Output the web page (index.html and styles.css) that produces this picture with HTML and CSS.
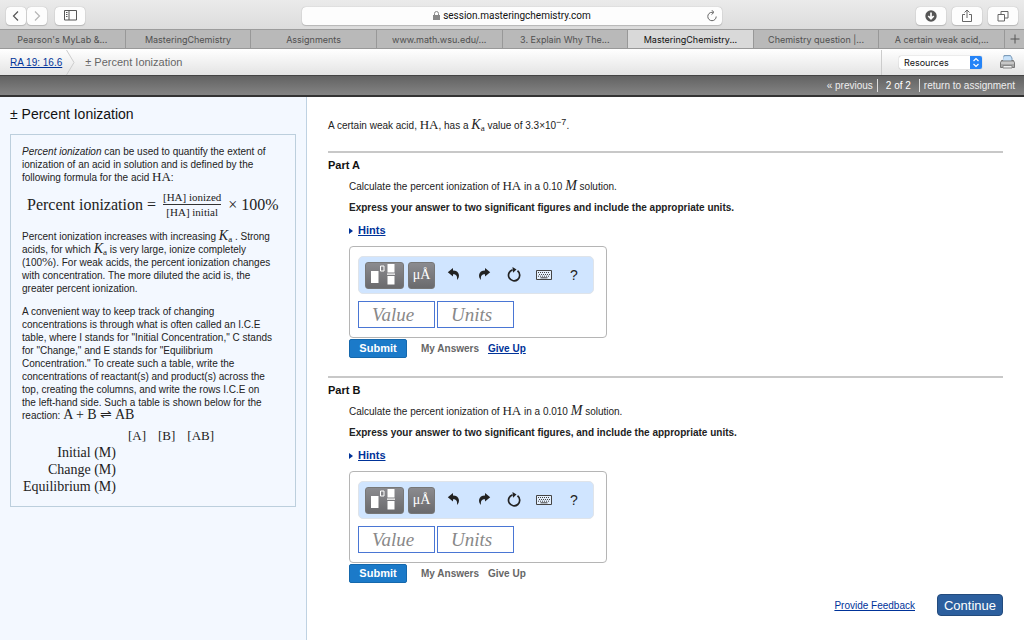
FILE: index.html
```html
<!DOCTYPE html>
<html lang="en">
<head>
<meta charset="utf-8">
<title>MasteringChemistry: ± Percent Ionization</title>
<link rel="stylesheet" href="styles.css">
</head>
<body>
<svg width="0" height="0" class="defs" aria-hidden="true">
  <symbol id="template" viewBox="1 1 28 22">
    <g fill="#fff"><path d="M0 8h8.500v12H0zM17.500 1h7v8.500h-7zM17.500 13h7v8.500h-7zM17 10.600h8v1.200h-8z"/></g>
    <path d="M10.500 3h3.500v5h-3.500z" fill="none" stroke="#fff" stroke-width="1"/>
  </symbol>
  <symbol id="undo" viewBox="0 0 14 14">
    <path d="M6 0 .8 4.200 6 8.400V6.300c2.800-.1 4.600 1.300 4 5.800 1.600-1.700 2.200-3.600 1.900-5.400C11.500 3.800 9.200 2.500 6 2.400z" fill="#222"/>
  </symbol>
  <symbol id="reset" viewBox="0 0 16 16">
    <path d="M11.500 3.800A5.600 5.600 0 1 1 6.500 2.900" fill="none" stroke="#222" stroke-width="1.700"/>
    <path d="M6.500 0 10.500 2.600 7 5.800z" fill="#222"/>
  </symbol>
  <symbol id="keyboard" viewBox="0 0 16 12">
    <path d="M.5 1.500h15v9H.5z" fill="#e4effc" stroke="#444"/>
    <path d="M2 3.500h12M3 5.500h11M2 7.200h12" fill="none" stroke="#444" stroke-dasharray="1 1"/>
    <path d="M4.500 8.800h7" stroke="#444"/>
  </symbol>
</svg>

<header class="browser-bar">
  <div class="bar-group">
    <div class="nav-pair">
      <button class="chrome-btn back" aria-label="Back"><svg width="10" height="12" viewBox="0 0 10 12"><path d="M7 1.500 2.500 6 7 10.500" fill="none" stroke="#555" stroke-width="1.200"/></svg></button>
      <button class="chrome-btn back" aria-label="Forward"><svg width="10" height="12" viewBox="0 0 10 12"><path d="M3 1.500 7.500 6 3 10.500" fill="none" stroke="#b5b5b5" stroke-width="1.200"/></svg></button>
    </div>
    <button class="chrome-btn" aria-label="Sidebar"><svg width="13" height="11" viewBox="0 0 13 11"><path d="M.5.5h12v9.500H.5zM5 .5V10" fill="none" stroke="#555"/><path d="M2 2.500h1.500M2 4.500h1.500M2 6.500h1.500" stroke="#555"/></svg></button>
  </div>
  <div class="address">
    <span class="address-text"><svg width="7" height="9" viewBox="0 0 7 9"><path d="M0 4h7v5H0z" fill="#888"/><path d="M1.500 4V2.500a2 2 0 0 1 4 0V4" fill="none" stroke="#888"/></svg>session.masteringchemistry.com</span>
    <button class="reload" aria-label="Reload"><svg width="12" height="12" viewBox="0 0 12 12"><path d="M7 2.300H6A4.200 4.200 0 1 0 10.200 6.500" fill="none" stroke="#666"/><path d="M5.500 0 8 2.300 5.500 4.600" fill="none" stroke="#666"/></svg></button>
  </div>
  <div class="bar-group bar-end">
    <button class="chrome-btn" aria-label="Downloads"><svg width="12" height="12" viewBox="0 0 12 12"><circle cx="6" cy="6" r="5.700" fill="#555"/><path d="M6 2.500v6M3.300 6 6 8.800 8.700 6" fill="none" stroke="#fff" stroke-width="1.700"/></svg></button>
    <button class="chrome-btn" aria-label="Share"><svg width="12" height="14" viewBox="0 0 12 14"><path d="M4 5.500H1.500v7h9v-7H8M6 9V1.200M3.500 3.500 6 1l2.500 2.500" fill="none" stroke="#666"/></svg></button>
    <button class="chrome-btn" aria-label="Show all tabs"><svg width="12" height="12" viewBox="0 0 12 12"><path d="M1 4.500h6.500V11H1z" fill="none" stroke="#666"/><path d="M4 4.500v-3h7V8H7.500" fill="none" stroke="#666"/></svg></button>
  </div>
</header>

<nav class="tabs" aria-label="Open tabs">
  <a class="tab" href="#">Pearson's MyLab &amp;...</a>
  <a class="tab" href="#">MasteringChemistry</a>
  <a class="tab" href="#">Assignments</a>
  <a class="tab" href="#">www.math.wsu.edu/...</a>
  <a class="tab" href="#">3. Explain Why The...</a>
  <a class="tab current" href="#">MasteringChemistry...</a>
  <a class="tab" href="#">Chemistry question |...</a>
  <a class="tab" href="#">A certain weak acid,...</a>
  <button class="new-tab" aria-label="New tab"><svg width="10" height="10" viewBox="0 0 10 10"><path d="M5 .5v9M.5 5h9" stroke="#555"/></svg></button>
</nav>

<div class="crumbs">
  <a class="crumb-link" href="#">RA 19: 16.6</a>
  <svg class="chevron" width="9" height="25" viewBox="0 0 9 25"><path d="M.5 0 8 12.500.5 25" fill="none" stroke="#ccc"/></svg>
  <span class="crumb-here">± Percent Ionization</span>
  <div class="tools">
    <div class="picker">
      <select aria-label="Resources"><option>Resources</option></select>
      <svg class="picker-arrows" width="12" height="13" viewBox="0 0 12 13"><path d="M0 0h10a2 2 0 0 1 2 2v9a2 2 0 0 1-2 2H0z" fill="#2584f7"/><path d="m3.500 5 2.500-2.500L8.500 5M3.500 8 6 10.500 8.500 8" fill="none" stroke="#fff" stroke-width="1.200"/></svg>
    </div>
    <button class="print" aria-label="Print"><svg width="15" height="14" viewBox="0 0 15 14"><path d="M3 7 4 .5h6.500L12 3v4z" fill="#b9d8f3" stroke="#7f9cb8"/><path d="M1.500 5.500h12L14.500 8v4.500H.5V8z" fill="#a7a7a7" stroke="#777"/><path d="M3 5.500 3.500 2h7l1 3.500z" fill="#c8e1f8"/><path d="M1 8h13" stroke="#e8e8e8"/><path d="M3 10.500h9v2.500H3z" fill="#eee" stroke="#888"/></svg></button>
  </div>
</div>

<nav class="pager" aria-label="Assignment items">
  <a href="#">« previous</a>
  <span class="pager-count">2 of 2</span>
  <a href="#">return to assignment</a>
</nav>

<div class="workspace">
  <aside class="intro">
    <h1>± Percent Ionization</h1>
    <div class="intro-box">
      <p><em>Percent ionization</em> can be used to quantify the extent of ionization of an acid in solution and is defined by the following formula for the acid <span class="math">HA</span>:</p>
      <div class="formula">
        <span>Percent ionization =</span>
        <span class="fraction"><span class="numerator">[HA] ionized</span><span>[HA] initial</span></span>
        <span>× 100%</span>
      </div>
      <p>Percent ionization increases with increasing <span class="math"><i>K</i><sub>a</sub></span> . Strong acids, for which <span class="math"><i>K</i><sub>a</sub></span> is very large, ionize completely (100<span class="math">%</span>). For weak acids, the percent ionization changes with concentration. The more diluted the acid is, the greater percent ionization.</p>
      <p>A convenient way to keep track of changing concentrations is through what is often called an I.C.E table, where I stands for "Initial Concentration," C stands for "Change," and E stands for "Equilibrium Concentration." To create such a table, write the concentrations of reactant(s) and product(s) across the top, creating the columns, and write the rows I.C.E on the left-hand side. Such a table is shown below for the reaction: <span class="math reaction">A + B ⇌ AB</span></p>
      <table class="ice">
        <thead><tr><td></td><th scope="col">[A]</th><th scope="col">[B]</th><th scope="col">[AB]</th></tr></thead>
        <tbody>
          <tr><th scope="row">Initial (M)</th><td></td><td></td><td></td></tr>
          <tr><th scope="row">Change (M)</th><td></td><td></td><td></td></tr>
          <tr><th scope="row">Equilibrium (M)</th><td></td><td></td><td></td></tr>
        </tbody>
      </table>
    </div>
  </aside>

  <main class="problem">
    <p class="stem">A certain weak acid, <span class="math">HA</span>, has a <span class="math"><i>K</i><sub>a</sub></span> value of 3.3×10<sup>−7</sup>.</p>

    <section class="part">
      <h2>Part A</h2>
      <div class="part-body">
        <p>Calculate the percent ionization of <span class="math">HA</span> in a 0.10 <span class="math"><i>M</i></span> solution.</p>
        <p class="directions">Express your answer to two significant figures and include the appropriate units.</p>
        <p class="hints"><svg width="4" height="6" viewBox="0 0 4 6"><path d="M0 0 4 3 0 6z" fill="#003399"/></svg><a href="#">Hints</a></p>
        <div class="answer">
          <div class="answer-tools">
            <button class="tool-dark wide" aria-label="Templates"><svg width="28" height="22"><use href="#template"/></svg></button>
            <button class="tool-dark">μÅ</button>
            <div class="tool-list">
              <button class="tool" aria-label="Undo"><svg width="14" height="14"><use href="#undo"/></svg></button>
              <button class="tool" aria-label="Redo"><svg class="flip" width="14" height="14"><use href="#undo"/></svg></button>
              <button class="tool" aria-label="Reset"><svg width="16" height="16"><use href="#reset"/></svg></button>
              <button class="tool" aria-label="Keyboard shortcuts"><svg width="16" height="12"><use href="#keyboard"/></svg></button>
              <button class="tool">?</button>
            </div>
          </div>
          <div class="fields">
            <input type="text" placeholder="Value" aria-label="Part A value">
            <input type="text" placeholder="Units" aria-label="Part A units">
          </div>
        </div>
        <div class="actions">
          <button class="submit">Submit</button>
          <span>My Answers</span>
          <a href="#">Give Up</a>
        </div>
      </div>
    </section>

    <section class="part">
      <h2>Part B</h2>
      <div class="part-body">
        <p>Calculate the percent ionization of <span class="math">HA</span> in a 0.010 <span class="math"><i>M</i></span> solution.</p>
        <p class="directions">Express your answer to two significant figures, and include the appropriate units.</p>
        <p class="hints"><svg width="4" height="6" viewBox="0 0 4 6"><path d="M0 0 4 3 0 6z" fill="#003399"/></svg><a href="#">Hints</a></p>
        <div class="answer">
          <div class="answer-tools">
            <button class="tool-dark wide" aria-label="Templates"><svg width="28" height="22"><use href="#template"/></svg></button>
            <button class="tool-dark">μÅ</button>
            <div class="tool-list">
              <button class="tool" aria-label="Undo"><svg width="14" height="14"><use href="#undo"/></svg></button>
              <button class="tool" aria-label="Redo"><svg class="flip" width="14" height="14"><use href="#undo"/></svg></button>
              <button class="tool" aria-label="Reset"><svg width="16" height="16"><use href="#reset"/></svg></button>
              <button class="tool" aria-label="Keyboard shortcuts"><svg width="16" height="12"><use href="#keyboard"/></svg></button>
              <button class="tool">?</button>
            </div>
          </div>
          <div class="fields">
            <input type="text" placeholder="Value" aria-label="Part B value">
            <input type="text" placeholder="Units" aria-label="Part B units">
          </div>
        </div>
        <div class="actions">
          <button class="submit">Submit</button>
          <span>My Answers</span>
          <span>Give Up</span>
        </div>
      </div>
    </section>

    <footer class="finish">
      <a href="#">Provide Feedback</a>
      <button class="continue">Continue</button>
    </footer>
  </main>
</div>
</body>
</html>
```
FILE: styles.css
```css
* { box-sizing: border-box; }
body {
  margin: 0;
  min-height: 100vh;
  display: flex;
  flex-direction: column;
  font: 10px/13px "Liberation Sans", Arial, sans-serif;
  color: #222;
  background: #fff;
}
.defs { position: absolute; }
svg { display: block; flex: none; }
button { font: inherit; margin: 0; padding: 0; border: 0; background: none; color: inherit; }
p, h1, h2 { margin: 0; }
a { color: #003399; }

.browser-bar {
  display: grid;
  grid-template-columns: 1fr 420px 1fr;
  align-items: center;
  height: 29px;
  padding: 2px 6px 0;
  background: linear-gradient(#ebebeb, #dcdcdc);
}
.bar-group { display: flex; gap: 8px; }
.bar-end { justify-content: flex-end; gap: 6px; }
.nav-pair { display: flex; gap: 1px; }
.chrome-btn {
  display: flex;
  align-items: center;
  justify-content: center;
  width: 30px;
  height: 18px;
  border-radius: 4px;
  background: #fdfdfd;
  box-shadow: 0 0 1px #999, 0 1px 1px #bbb;
}
.chrome-btn.back { width: 20px; }
.address {
  display: grid;
  grid-template-columns: 16px 1fr 16px;
  align-items: center;
  height: 18px;
  border-radius: 4px;
  background: #fdfdfd;
  box-shadow: 0 0 1px #999, 0 1px 1px #bbb;
  font-family: Roboto, sans-serif;
  color: #111;
}
.address-text { grid-column: 2; display: flex; align-items: center; justify-content: center; gap: 3px; }

.tabs {
  display: flex;
  height: 20px;
  border-top: 1px solid #9c9c9c;
  border-bottom: 1px solid #999;
  background: #b9b9b9;
  font: 9px/19px Inter, Roboto, sans-serif;
}
.tab {
  flex: 1;
  border-right: 1px solid #989898;
  color: #505050;
  text-align: center;
  text-decoration: none;
  white-space: nowrap;
}
.tab.current { background: #d9d9d9; color: #111; }
.new-tab { display: flex; align-items: center; justify-content: center; width: 19px; }

.crumbs {
  display: flex;
  align-items: center;
  height: 26px;
  padding-left: 10px;
  background: linear-gradient(#fff, #e4e4e4);
}
.chevron { margin: 0 10px 0 4px; }
.crumb-here { font-size: 11px; color: #666; }
.tools {
  display: flex;
  align-items: center;
  gap: 18px;
  height: 25px;
  margin-left: auto;
  padding: 0 9px 0 17px;
  border-left: 1px solid #ccc;
}
.picker { position: relative; }
.picker select {
  display: block;
  width: 83px;
  height: 13px;
  padding: 0 5px;
  border: 0;
  border-radius: 2px;
  background: #fff;
  box-shadow: 0 0 1px #888;
  font: 9px/13px Inter, Roboto, sans-serif;
  color: #111;
  appearance: none;
}
.picker-arrows { position: absolute; top: 0; right: 0; pointer-events: none; }

.pager {
  display: flex;
  justify-content: flex-end;
  align-items: center;
  height: 22px;
  padding-right: 9px;
  border-top: 1px solid #444;
  border-bottom: 2px solid #333;
  background: linear-gradient(#626262, #848484);
  color: #fff;
}
.pager a { color: #eee; text-decoration: none; }
.pager-count {
  margin: 0 4px;
  padding: 0 8px;
  border-left: 1px solid #ddd;
  border-right: 1px solid #ddd;
}

.workspace { flex: 1; display: flex; }
.intro {
  flex: none;
  width: 307px;
  padding: 9px 10px;
  border-right: 1px solid #bfd2e2;
  background: #f3f8ff;
}
.intro h1 { margin-bottom: 12px; font-size: 14px; line-height: 16px; font-weight: 400; color: #111; }
.intro-box {
  padding: 10px 22px 11px 11px;
  border: 1px solid #bccfdd;
}
.intro-box p + p { margin-top: 10px; }
.math { font: 13px/1px "Liberation Serif", "Times New Roman", serif; white-space: nowrap; }
.math i { font-size: 14px; }
.reaction { font-size: 14px; }
sub, sup { font-size: 9px; line-height: 1px; }
sub { vertical-align: -2px; }
sup { vertical-align: 4px; }
.formula {
  display: flex;
  align-items: center;
  gap: 7px;
  margin: 6px 0 11px 5px;
  font: 16px/28px "Liberation Serif", "Times New Roman", serif;
  white-space: nowrap;
}
.fraction { display: grid; font-size: 11px; line-height: 14px; text-align: center; }
.numerator { border-bottom: 1px solid #333; }
.ice {
  margin-top: 5px;
  border-collapse: collapse;
  font: 14px/17px "Liberation Serif", "Times New Roman", serif;
}
.ice th, .ice td { padding: 0; font-weight: 400; }
.ice th[scope="row"] { padding: 0 6px 0 1px; text-align: right; }
.ice th[scope="col"] { padding: 0 6px; font-size: 13px; }

.problem { flex: 1; padding: 22px 21px; }
.stem { margin-bottom: 19px; }
.part { padding-top: 5px; border-top: 2px solid #c8c8c8; }
.part h2 { font-size: 11px; line-height: 14px; color: #111; }
.part-body { padding: 8px 0 18px 21px; }
.directions { margin-top: 8px; font-weight: 700; }
.hints { display: flex; align-items: center; gap: 5px; margin: 10px 0 9px; font-weight: 700; }
.hints a { font-size: 11px; }
.answer {
  width: 258px;
  padding: 9px 9px 9px 8px;
  border: 1px solid #b5b5b5;
  border-radius: 4px;
}
.answer-tools {
  display: flex;
  align-items: center;
  gap: 4px;
  width: 236px;
  height: 38px;
  padding: 0 4px 0 6px;
  border: 1px solid #dfe4ea;
  border-radius: 5px;
  background: #d0e5ff;
}
.tool-dark {
  display: flex;
  align-items: center;
  justify-content: center;
  width: 27px;
  height: 27px;
  border: 1px solid #777;
  border-radius: 3px;
  background: linear-gradient(#8b8b8f, #6a6a6d);
  color: #fff;
  font: 14px/24px "Liberation Serif", "Times New Roman", serif;
}
.tool-dark.wide { width: 39px; }
.tool-list { flex: 1; display: flex; }
.tool { flex: 1; display: flex; align-items: center; justify-content: center; font-size: 14px; }
.flip { transform: scaleX(-1); }
.fields { display: flex; gap: 2px; margin-top: 7px; }
.fields input {
  width: 77px;
  height: 27px;
  padding: 0 0 0 13px;
  border: 1px solid #4a76d4;
  font: italic 19px/25px "Liberation Serif", "Times New Roman", serif;
  color: #222;
}
.fields input::placeholder { color: #888; opacity: 1; }
.actions { display: flex; align-items: center; gap: 9px; margin-top: 1px; font-weight: 700; color: #666; }
.submit {
  width: 58px;
  height: 19px;
  margin-right: 5px;
  border: 1px solid #1568ac;
  border-radius: 2px;
  background: #1b7ac9;
  color: #fff;
  font-size: 11px;
}
.finish { display: flex; align-items: center; justify-content: flex-end; gap: 22px; margin-top: -7px; }
.continue {
  width: 66px;
  height: 22px;
  border: 1px solid #234b7d;
  border-radius: 4px;
  background: #2c5f9e;
  color: #fff;
  font-size: 13px;
}
```
